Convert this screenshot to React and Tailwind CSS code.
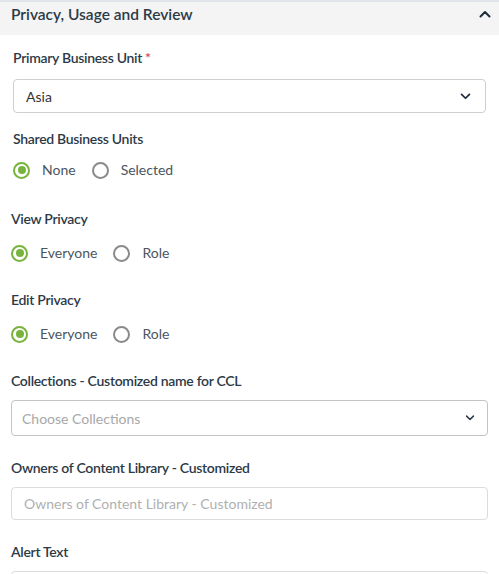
import React from "react";

const font = { fontFamily: "Lato, 'Noto Sans', sans-serif" };

const ChevronDown = ({ className = "" }) => (
  <svg viewBox="0 0 12 8" className={className} fill="none" stroke="currentColor" strokeWidth="2" strokeLinecap="round" strokeLinejoin="round">
    <path d="M1.5 1.5 6 6l4.5-4.5" />
  </svg>
);

const ChevronUp = ({ className = "" }) => (
  <svg viewBox="0 0 12 8" className={className} fill="none" stroke="currentColor" strokeWidth="2" strokeLinecap="round" strokeLinejoin="round">
    <path d="M1.5 6.5 6 2l4.5 4.5" />
  </svg>
);

const Radio = ({ checked, label }) => (
  <label className="flex items-center gap-[12px] h-[20px]">
    <span
      className={`w-[17px] h-[17px] rounded-full border-2 flex items-center justify-center ${
        checked ? "border-[#78b33d]" : "border-[#8a8a8a]"
      }`}
    >
      {checked && <span className="w-[8px] h-[8px] rounded-full bg-[#78b33d]" />}
    </span>
    <span className="text-[14px] leading-[20px] text-[#4b5560]">{label}</span>
  </label>
);

const Label = ({ children, required }) => (
  <div className="text-[14px] font-semibold tracking-[-0.3px] text-[#2c3a47] leading-[18px]">
    {children}
    {required && <span className="text-[#e53e3e] ml-[3px]">*</span>}
  </div>
);

export default function App() {
  return (
    <div className="w-[499px] h-[574px] overflow-hidden bg-white border-t-2 border-[#e1e5ea]" style={font}>
      <div className="h-[33px] bg-[#f4f4f4] flex items-start justify-between pt-[2px] pl-[11px] pr-[8px]">
        <span className="text-[15.5px] leading-[20px] font-semibold text-[#2c3a47]">Privacy, Usage and Review</span>
        <ChevronUp className="w-[12px] h-[8px] mt-[6px] text-[#1d2b3a]" />
      </div>

      <div className="px-[13px] pt-[14px]">
        <Label required>Primary Business Unit</Label>
        <div className="mt-[12px] h-[34px] w-[473px] border border-[#cfcfcf] rounded-[4px] flex items-center justify-between pl-[12px] pr-[14px]">
          <span className="text-[14px] text-[#333]">Asia</span>
          <ChevronDown className="w-[11px] h-[7px] text-[#1d2b3a]" />
        </div>

        <div className="mt-[17px]">
          <Label>Shared Business Units</Label>
        </div>
        <div className="mt-[12px] flex items-center gap-[16px]">
          <Radio checked label="None" />
          <Radio label="Selected" />
        </div>
      </div>

      <div className="px-[11px]">
        <div className="mt-[30px]">
          <Label>View Privacy</Label>
        </div>
        <div className="mt-[15px] flex items-center gap-[16px]">
          <Radio checked label="Everyone" />
          <Radio label="Role" />
        </div>

        <div className="mt-[28px]">
          <Label>Edit Privacy</Label>
        </div>
        <div className="mt-[15px] flex items-center gap-[16px]">
          <Radio checked label="Everyone" />
          <Radio label="Role" />
        </div>

        <div className="mt-[28px]">
          <Label>Collections - Customized name for CCL</Label>
        </div>
        <div className="mt-[10px] h-[36px] w-[477px] border border-[#c4c4c4] rounded-[4px] flex items-center justify-between pl-[10px] pr-[12px]">
          <span className="text-[14px] text-[#a8a8a8]">Choose Collections</span>
          <ChevronDown className="w-[10px] h-[6px] text-[#2c3a47]" />
        </div>

        <div className="mt-[23px]">
          <Label>Owners of Content Library - Customized</Label>
        </div>
        <div className="mt-[10px] h-[33px] w-[477px] border border-[#dcdcdc] rounded-[4px] flex items-center pl-[12px]">
          <span className="text-[14px] text-[#b0b0b0]">Owners of Content Library - Customized</span>
        </div>

        <div className="mt-[23px]">
          <Label>Alert Text</Label>
        </div>
        <div className="mt-[10px] h-[33px] w-[477px] border border-[#dcdcdc] rounded-[4px]" />
      </div>
    </div>
  );
}
